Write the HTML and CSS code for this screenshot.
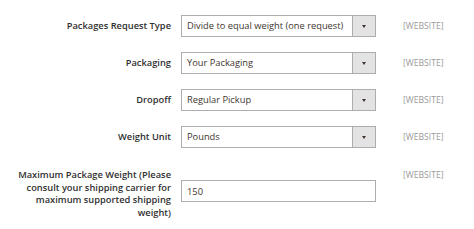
FILE: index.html
```html
<!DOCTYPE html>
<html lang="en">
<head>
    <meta charset="UTF-8">
    <meta name="viewport" content="width=device-width, initial-scale=1.0">
    <title>Shipping Settings</title>
    <link rel="stylesheet" href="styles.css">
</head>
<body>
    <div class="fieldset">
        <!-- Packages request type -->
        <div class="field">
            <label class="field-label">Packages Request Type</label>
            <div class="select">
                <span class="select-value">Divide to equal weight (one request)</span>
                <span class="select-arrow"></span>
            </div>
            <span class="scope">[WEBSITE]</span>
        </div>

        <div class="field">
            <label class="field-label">Packaging</label>
            <div class="select">
                <span class="select-value">Your Packaging</span>
                <span class="select-arrow"></span>
            </div>
            <span class="scope">[WEBSITE]</span>
        </div>

        <div class="field">
            <label class="field-label">Dropoff</label>
            <div class="select">
                <span class="select-value">Regular Pickup</span>
                <span class="select-arrow"></span>
            </div>
            <span class="scope">[WEBSITE]</span>
        </div>

        <div class="field">
            <label class="field-label">Weight Unit</label>
            <div class="select">
                <span class="select-value">Pounds</span>
                <span class="select-arrow"></span>
            </div>
            <span class="scope">[WEBSITE]</span>
        </div>

        <!-- Max weight -->
        <div class="field field-tall">
            <label class="field-label" for="maxWeight">Maximum Package Weight (Please consult your shipping carrier for maximum supported shipping weight)</label>
            <input class="text-input" type="text" id="maxWeight" value="150">
            <span class="scope">[WEBSITE]</span>
        </div>
    </div>
</body>
</html>
```

FILE: styles.css
```css
body {
    margin: 0;
    background: #fff;
    font-family: "Open Sans", sans-serif;
    color: #303030;
}
.fieldset {
    padding-top: 15px;
}
.field {
    display: grid;
    grid-template-columns: 171px 195px 1fr;
    column-gap: 10px;
    align-items: center;
    margin-bottom: 15px;
}
.field-label {
    padding-left: 16px;
    font-size: 9.3px;
    font-weight: 600;
    line-height: 12.5px;
    text-align: right;
}
.select {
    display: flex;
    height: 22px;
    box-sizing: border-box;
    border: 1px solid #adadad;
    background: #fff;
}
.select-value {
    flex: 1;
    padding-left: 5px;
    font-size: 9.3px;
    line-height: 20px;
    color: #41362f;
    white-space: nowrap;
    overflow: hidden;
}
.select-arrow {
    width: 22px;
    border-left: 1px solid #adadad;
    background: #e3e3e3;
    display: flex;
    align-items: center;
    justify-content: center;
}
.select-arrow::after {
    content: "";
    border-left: 2.5px solid transparent;
    border-right: 2.5px solid transparent;
    border-top: 3px solid #41362f;
}
.scope {
    margin-left: 17px;
    font-size: 8.6px;
    color: #999;
}
.field-tall {
    align-items: start;
    margin-top: 21px;
}
.text-input {
    margin: 11px 0 0;
    height: 22px;
    box-sizing: border-box;
    border: 1px solid #adadad;
    padding: 0 5px;
    font-family: "Open Sans", sans-serif;
    font-size: 9.3px;
    color: #41362f;
}
.field-tall .scope {
    line-height: 12.5px;
}
```
